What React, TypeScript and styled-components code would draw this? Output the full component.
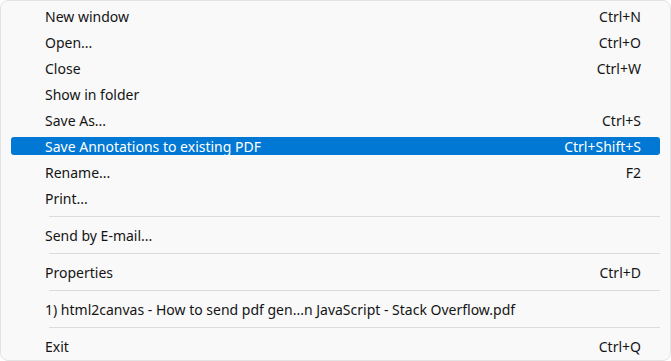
import React from 'react';
import styled, { createGlobalStyle } from 'styled-components';

type Entry =
  | { kind: 'item'; label: string; shortcut?: string; active?: boolean }
  | { kind: 'sep' };

const entries: Entry[] = [
  { kind: 'item', label: 'New window', shortcut: 'Ctrl+N' },
  { kind: 'item', label: 'Open...', shortcut: 'Ctrl+O' },
  { kind: 'item', label: 'Close', shortcut: 'Ctrl+W' },
  { kind: 'item', label: 'Show in folder' },
  { kind: 'item', label: 'Save As...', shortcut: 'Ctrl+S' },
  { kind: 'item', label: 'Save Annotations to existing PDF', shortcut: 'Ctrl+Shift+S', active: true },
  { kind: 'item', label: 'Rename...', shortcut: 'F2' },
  { kind: 'item', label: 'Print...' },
  { kind: 'sep' },
  { kind: 'item', label: 'Send by E-mail...' },
  { kind: 'sep' },
  { kind: 'item', label: 'Properties', shortcut: 'Ctrl+D' },
  { kind: 'sep' },
  { kind: 'item', label: '1) html2canvas - How to send pdf gen...n JavaScript - Stack Overflow.pdf' },
  { kind: 'sep' },
  { kind: 'item', label: 'Exit', shortcut: 'Ctrl+Q' },
];

const GlobalStyle = createGlobalStyle`
  html, body {
    margin: 0;
    padding: 0;
    background: #ffffff;
  }
  * {
    box-sizing: border-box;
  }
`;

const Menu = styled.div`
  width: 671px;
  height: 361px;
  background: #f9f9f9;
  border: 1px solid #e3e3e3;
  border-radius: 8px;
  padding: 6px 10px 0 10px;
  display: flex;
  flex-direction: column;
  gap: 8px;
  font-family: 'Noto Sans', 'Segoe UI', sans-serif;
  font-size: 14px;
  color: #141414;
  overflow: hidden;
`;

const Item = styled.div<{ $active?: boolean }>`
  height: 18px;
  display: flex;
  align-items: center;
  justify-content: space-between;
  padding: 2px 19px 0 34px;
  border-radius: 3px;
  background: ${(p) => (p.$active ? '#0078d4' : 'transparent')};
  color: ${(p) => (p.$active ? '#ffffff' : '#141414')};
  white-space: nowrap;
  line-height: 18px;
`;

const Label = styled.span``;

const Shortcut = styled.span``;

const Separator = styled.div`
  height: 3px;
  margin-left: 38px;
  padding-top: 1px;
  &::before {
    content: '';
    display: block;
    border-top: 1px solid #dcdcdc;
  }
`;

export default function App() {
  return (
    <>
      <GlobalStyle />
      <Menu>
        {entries.map((e, i) =>
          e.kind === 'sep' ? (
            <Separator key={i} />
          ) : (
            <Item key={i} $active={e.active}>
              <Label>{e.label}</Label>
              {e.shortcut && <Shortcut>{e.shortcut}</Shortcut>}
            </Item>
          )
        )}
      </Menu>
    </>
  );
}
